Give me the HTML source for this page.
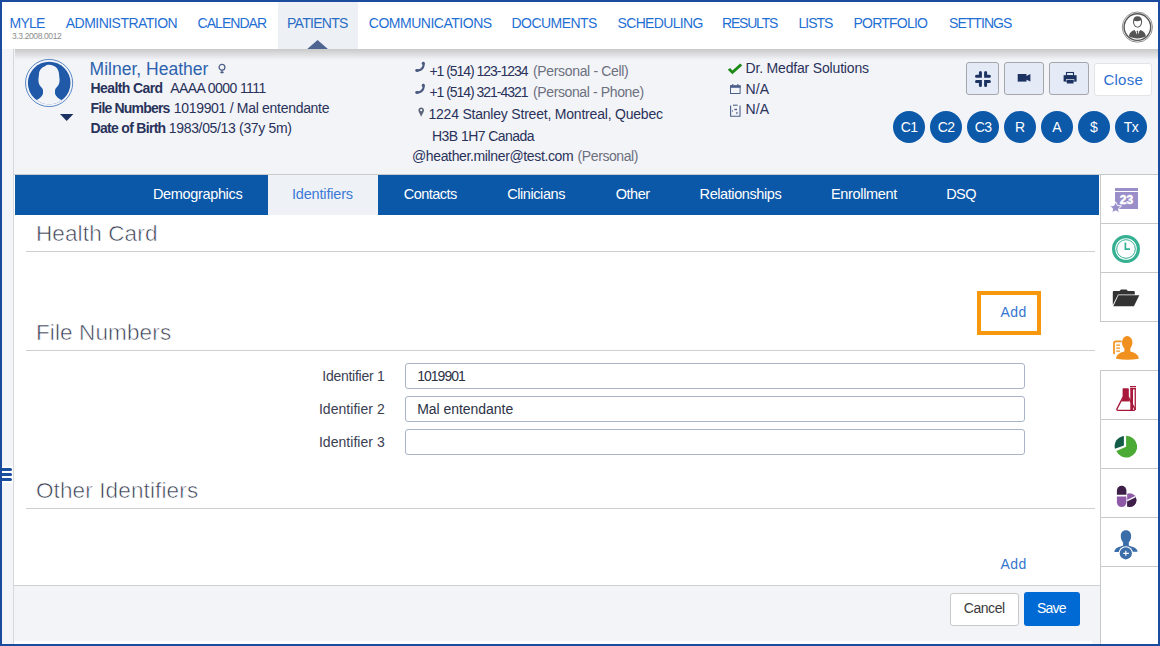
<!DOCTYPE html>
<html><head><meta charset="utf-8">
<style>
html,body{margin:0;padding:0;width:1160px;height:646px;overflow:hidden;background:#fff;font-family:"Liberation Sans",sans-serif;}
.a{position:absolute;}
.t{position:absolute;white-space:nowrap;font-family:"Liberation Sans",sans-serif;}
svg{position:absolute;overflow:visible;}
</style></head><body>
<!-- nav -->
<div class="a" style="left:0;top:0;width:1160px;height:49px;background:#fff"></div>
<div class="a" style="left:278px;top:2px;width:80px;height:47px;background:#edf1f6"></div>
<svg style="left:0;top:0" width="1160" height="60"><polygon points="307.2,49 317.6,40 327.9,49" fill="#4f6591"/></svg>
<!-- user avatar -->
<svg style="left:1118px;top:8px" width="38" height="38" viewBox="0 0 38 38">
 <circle cx="19.4" cy="19.1" r="15.1" fill="none" stroke="#808080" stroke-width="0.9"/>
 <circle cx="19.4" cy="19.1" r="13.3" fill="none" stroke="#555" stroke-width="1.4"/>
 <path d="M15 13.5c0-3.4 1.9-5.3 4.5-5.3s4.6 1.9 4.6 5.2c0 3.5-1.9 6-4.6 6s-4.5-2.5-4.5-5.9z" fill="#555"/>
 <path d="M16.2 12.8c1.2 0.8 4.8 0.6 6.7-0.6 0.2 0.8 0.2 1.6 0.1 2.4-0.3 2.4-1.7 4.1-3.5 4.1s-3.2-1.7-3.4-4.1c-0.1-0.6 0-1.2 0.1-1.8z" fill="#fff"/>
 <path d="M10.9 28.3c0.3-3.3 2.1-5.2 5.6-6.4l2.9 3.2 2.9-3.2c3.5 1.2 5.3 3.1 5.6 6.4-2.3 1.3-5.5 2.1-8.5 2.1s-6.2-0.8-8.5-2.1z" fill="#555"/>
 <path d="M17 21.7l2.4 6.6 2.4-6.6-1.5-0.4-0.9 1-0.9-1z" fill="#fff"/>
 <path d="M19.4 22.6l-0.9 1 0.5 0.8-0.6 3.3 1 1.3 1-1.3-0.6-3.3 0.5-0.8z" fill="#555"/>
</svg>

<!-- left strip -->
<div class="a" style="left:2px;top:49px;width:11px;height:597px;background:#f3f4f8"></div>
<div class="a" style="left:13px;top:49px;width:1px;height:597px;background:#d6d8de"></div>
<!-- hamburger -->
<div class="a" style="left:2px;top:466px;width:11px;height:17px;background:#fff"></div>
<div class="a" style="left:2px;top:468.3px;width:10px;height:2.5px;background:#1a4fa0;border-radius:0 2px 2px 0"></div>
<div class="a" style="left:2px;top:473.3px;width:10px;height:2.5px;background:#1a4fa0;border-radius:0 2px 2px 0"></div>
<div class="a" style="left:2px;top:478.2px;width:10px;height:2.5px;background:#1a4fa0;border-radius:0 2px 2px 0"></div>

<!-- banner -->
<div class="a" style="left:14px;top:49px;width:1144px;height:125px;background:#f3f4f8"></div>
<div class="a" style="left:14px;top:173.5px;width:1144px;height:1px;background:#c9cacd"></div>
<div class="a" style="left:15px;top:49px;width:1143px;height:11px;background:linear-gradient(#c9c9c9,rgba(243,244,248,0))"></div>

<!-- patient avatar -->
<svg style="left:25px;top:59px" width="48" height="48" viewBox="0 0 48 48">
 <defs><clipPath id="pc"><circle cx="24.2" cy="24" r="21.3"/></clipPath></defs>
 <circle cx="24.1" cy="24" r="23.6" fill="none" stroke="#4a7cc0" stroke-width="0.9"/>
 <circle cx="24.2" cy="24" r="21.3" fill="#2059a8"/>
 <path clip-path="url(#pc)" d="M24 5.8C29.5 5.8 33.8 9.5 34 15C34.2 18 34.8 20 34.5 22.5C34.2 25 33 27 31.5 28.5C30.5 29.5 30 30.5 30 32L30 34.5C30.5 37 33 39.5 37.5 41.5L40 50L8 50L10.5 41.5C15 39.5 17.5 37 18 34.5L18 32C18 30.5 17.5 29.5 16.5 28.5C15 27 13.8 25 13.5 22.5C13.2 20 13.8 18 14 15C14.2 11 17 8 20 7.2C21.2 6.2 22.5 5.8 24 5.8z" fill="#f3f4f8"/>
</svg>
<svg style="left:59.7px;top:114px" width="14" height="8"><polygon points="0,0 13.4,0 6.7,7" fill="#1c3260"/></svg>
<!-- female symbol -->
<svg style="left:217px;top:63.2px" width="10" height="12" viewBox="0 0 10 12">
 <circle cx="5" cy="4.2" r="2.9" fill="none" stroke="#4d6189" stroke-width="1.3"/>
 <path d="M5 7v3.6M3.3 9.3h3.4" stroke="#4d6189" stroke-width="1.3"/>
</svg>
<!-- phone icons -->
<svg style="left:414px;top:61px" width="12" height="12" viewBox="0 0 12 12"><path d="M9.3 2C9.8 3 9.6 5 9 6.2 8.1 8 6.3 9.3 3.2 9.7" fill="none" stroke="#4a5a80" stroke-width="2.2" stroke-linecap="round"/><ellipse cx="9.3" cy="2.3" rx="1.5" ry="1.6" fill="#4a5a80"/><ellipse cx="3" cy="9.5" rx="1.8" ry="1.4" fill="#4a5a80"/></svg>
<svg style="left:414px;top:83px" width="12" height="12" viewBox="0 0 12 12"><path d="M9.3 2C9.8 3 9.6 5 9 6.2 8.1 8 6.3 9.3 3.2 9.7" fill="none" stroke="#4a5a80" stroke-width="2.2" stroke-linecap="round"/><ellipse cx="9.3" cy="2.3" rx="1.5" ry="1.6" fill="#4a5a80"/><ellipse cx="3" cy="9.5" rx="1.8" ry="1.4" fill="#4a5a80"/></svg>
<!-- pin -->
<svg style="left:417.5px;top:106.5px" width="7" height="10" viewBox="0 0 7 10">
 <path d="M3.2 0.4c-1.6 0-2.8 1.3-2.8 2.9 0 1.8 1.6 3.4 2.6 6.3h0.4c1-2.9 2.6-4.5 2.6-6.3 0-1.6-1.2-2.9-2.8-2.9z" fill="#5b6478"/>
 <circle cx="3.2" cy="3.2" r="1.1" fill="#f3f4f8"/>
</svg>
<!-- check -->
<svg style="left:727px;top:62.5px" width="16" height="12" viewBox="0 0 16 12">
 <path d="M0.8 6.8l2.3-1.9 2.3 2.5 7.8-6.9 2 1.9-9.8 8.9z" fill="#1d8a18"/>
</svg>
<!-- calendar small -->
<svg style="left:730px;top:84px" width="11" height="10" viewBox="0 0 11 10">
 <rect x="0.5" y="2.2" width="9.6" height="7.3" fill="none" stroke="#4c5f88" stroke-width="1"/>
 <rect x="0" y="1.2" width="10.6" height="2.6" fill="#4c5f88"/>
 <rect x="2.2" y="0" width="1.1" height="1.6" fill="#4c5f88"/><rect x="7.3" y="0" width="1.1" height="1.6" fill="#4c5f88"/>
</svg>
<!-- clipboard small -->
<svg style="left:730px;top:103.8px" width="11" height="13" viewBox="0 0 11 13">
 <path d="M0.6 1.6v10.6h9.4V1.6" fill="none" stroke="#4c5f88" stroke-width="1.1"/>
 <path d="M3 1.2h4.6" stroke="#4c5f88" stroke-width="1.1"/>
 <rect x="4.4" y="4.8" width="2.6" height="1.4" fill="#4c5f88"/>
 <rect x="2" y="6" width="1" height="2" fill="#8a9ab8"/>
 <rect x="6.2" y="8.2" width="1.4" height="1.6" fill="#4c5f88"/>
</svg>

<!-- action buttons -->
<div class="a" style="left:966.4px;top:62.2px;width:30.4px;height:30.6px;background:#e4ebf7;border:1px solid #a4a6ab;border-radius:3px"></div>
<div class="a" style="left:1004.3px;top:62.2px;width:37.5px;height:30.6px;background:#e4ebf7;border:1px solid #a4a6ab;border-radius:3px"></div>
<div class="a" style="left:1049px;top:62.2px;width:38px;height:30.6px;background:#e4ebf7;border:1px solid #a4a6ab;border-radius:3px"></div>
<div class="a" style="left:1094px;top:62.5px;width:55.5px;height:31.8px;background:#fff;border:1px solid #e2e4e8;border-radius:3px"></div>
<!-- compress icon -->
<svg style="left:970px;top:66px" width="26" height="26" viewBox="0 0 26 26" fill="none" stroke="#1c3260" stroke-width="3" stroke-linecap="round" stroke-linejoin="miter">
 <path d="M10.4 6.5V10.3H6.5"/><path d="M15.6 6.5V10.3H19.4"/><path d="M6.5 15.4H10.4V19.4"/><path d="M19.4 15.4H15.6V19.4"/>
</svg>
<!-- video icon -->
<svg style="left:1010px;top:66px" width="24" height="24" viewBox="0 0 24 24">
 <rect x="7.7" y="8" width="8.8" height="7.6" fill="#1c3260"/>
 <path d="M16 10.2L20.4 8V15.6L16 13.4z" fill="#1c3260"/>
</svg>
<!-- printer icon -->
<svg style="left:1060px;top:70px" width="20" height="16" viewBox="0 0 20 16">
 <rect x="6.5" y="2.5" width="7" height="3.3" fill="none" stroke="#1c3260" stroke-width="1.1"/>
 <rect x="3.6" y="5.2" width="13" height="6.4" fill="#1c3260"/>
 <rect x="6" y="9.2" width="8.3" height="1.4" fill="#e4ebf7"/>
 <rect x="6.8" y="9.9" width="6.7" height="3.6" fill="#1c3260"/>
</svg>
<!-- circles -->
<div class="a" style="left:893px;top:111px;width:32px;height:32px;border-radius:50%;background:#0c58a9"></div>
<div class="a" style="left:930px;top:111px;width:32px;height:32px;border-radius:50%;background:#0c58a9"></div>
<div class="a" style="left:967px;top:111px;width:32px;height:32px;border-radius:50%;background:#0c58a9"></div>
<div class="a" style="left:1004px;top:111px;width:32px;height:32px;border-radius:50%;background:#0c58a9"></div>
<div class="a" style="left:1041px;top:111px;width:32px;height:32px;border-radius:50%;background:#0c58a9"></div>
<div class="a" style="left:1078px;top:111px;width:32px;height:32px;border-radius:50%;background:#0c58a9"></div>
<div class="a" style="left:1115px;top:111px;width:32px;height:32px;border-radius:50%;background:#0c58a9"></div>
<div class="t" style="left:893px;top:119px;width:32px;text-align:center;font-size:14px;line-height:16px;color:#fff;letter-spacing:-0.6px">C1</div>
<div class="t" style="left:930px;top:119px;width:32px;text-align:center;font-size:14px;line-height:16px;color:#fff;letter-spacing:-0.6px">C2</div>
<div class="t" style="left:967px;top:119px;width:32px;text-align:center;font-size:14px;line-height:16px;color:#fff;letter-spacing:-0.6px">C3</div>
<div class="t" style="left:1004px;top:119px;width:32px;text-align:center;font-size:14px;line-height:16px;color:#fff">R</div>
<div class="t" style="left:1041px;top:119px;width:32px;text-align:center;font-size:14px;line-height:16px;color:#fff">A</div>
<div class="t" style="left:1078px;top:119px;width:32px;text-align:center;font-size:14px;line-height:16px;color:#fff">$</div>
<div class="t" style="left:1115px;top:119px;width:32px;text-align:center;font-size:14px;line-height:16px;color:#fff;letter-spacing:-0.6px">Tx</div>

<!-- tab bar -->
<div class="a" style="left:15px;top:174.5px;width:1084px;height:40.3px;background:#0b57a8"></div>
<div class="a" style="left:268px;top:174.5px;width:110.3px;height:40.3px;background:#eef2f7"></div>

<!-- content -->
<div class="a" style="left:14px;top:214.8px;width:1086px;height:370px;background:#fff"></div>
<div class="a" style="left:26px;top:251px;width:1069px;height:1px;background:#cfcfcf"></div>
<div class="a" style="left:26px;top:350px;width:1069px;height:1px;background:#cfcfcf"></div>
<div class="a" style="left:26px;top:508px;width:1069px;height:1px;background:#cfcfcf"></div>
<!-- inputs -->
<div class="a" style="left:405.4px;top:363.2px;width:617.2px;height:23.4px;border:1px solid #a9b4c8;border-radius:3px;background:#fff"></div>
<div class="a" style="left:405.4px;top:396.2px;width:617.2px;height:23.6px;border:1px solid #a9b4c8;border-radius:3px;background:#fff"></div>
<div class="a" style="left:405.4px;top:429.4px;width:617.2px;height:23.2px;border:1px solid #a9b4c8;border-radius:3px;background:#fff"></div>
<!-- add highlight -->
<div class="a" style="left:977px;top:291px;width:56px;height:36px;border:4px solid #f7970d"></div>

<!-- footer -->
<div class="a" style="left:14px;top:585px;width:1086px;height:59px;background:#f3f4f8"></div>
<div class="a" style="left:14px;top:585px;width:1086px;height:1px;background:#d0d0d0"></div>
<div class="a" style="left:950.4px;top:592.5px;width:66.3px;height:31px;background:#fff;border:1px solid #c9c9c9;border-radius:3px"></div>
<div class="a" style="left:1024px;top:592.3px;width:56px;height:33.5px;background:#006ad4;border-radius:3px"></div>
<div class="a" style="left:14px;top:641px;width:1078px;height:3px;background:#fff"></div>

<!-- right sidebar -->
<div class="a" style="left:1100px;top:174.5px;width:58px;height:470px;background:#fff"></div>
<div class="a" style="left:1100px;top:174.5px;width:1px;height:147px;background:#c9c9c9"></div>
<div class="a" style="left:1100px;top:370.5px;width:1px;height:275px;background:#c9c9c9"></div>
<div class="a" style="left:1100px;top:174px;width:58px;height:1px;background:#c9c9c9"></div>
<div class="a" style="left:1100px;top:223px;width:58px;height:1px;background:#c9c9c9"></div>
<div class="a" style="left:1100px;top:272px;width:58px;height:1px;background:#c9c9c9"></div>
<div class="a" style="left:1100px;top:321px;width:58px;height:1px;background:#c9c9c9"></div>
<div class="a" style="left:1100px;top:370px;width:58px;height:1px;background:#c9c9c9"></div>
<div class="a" style="left:1100px;top:419px;width:58px;height:1px;background:#c9c9c9"></div>
<div class="a" style="left:1100px;top:468px;width:58px;height:1px;background:#c9c9c9"></div>
<div class="a" style="left:1100px;top:517px;width:58px;height:1px;background:#c9c9c9"></div>
<div class="a" style="left:1100px;top:566px;width:58px;height:1px;background:#c9c9c9"></div>
<!-- sidebar icons -->
<svg style="left:1108px;top:186px" width="32" height="28" viewBox="0 0 32 28">
 <rect x="7" y="2" width="23" height="3" fill="#9b8fc9"/>
 <rect x="7" y="6" width="23" height="17" fill="#9b8fc9"/>
 <text x="18.4" y="18" font-family="Liberation Sans" font-weight="bold" font-size="12" fill="#fff" text-anchor="middle" stroke="#fff" stroke-width="0.5">23</text>
 <path d="M7.6 15.8l1.8 3.7 4.1 0.5-3 2.8 0.8 4-3.7-2-3.7 2 0.8-4-3-2.8 4.1-0.5z" fill="#9b8fc9" stroke="#fff" stroke-width="1"/>
</svg>
<svg style="left:1111px;top:234px" width="30" height="30" viewBox="0 0 30 30">
 <circle cx="15" cy="15" r="12.4" fill="none" stroke="#35b093" stroke-width="3.2"/>
 <circle cx="15" cy="15" r="9.3" fill="none" stroke="#35b093" stroke-width="1"/>
 <path d="M14.4 8.5v6.6h4.6" fill="none" stroke="#35b093" stroke-width="1.7"/>
</svg>
<svg style="left:1112px;top:289px" width="28" height="18" viewBox="0 0 28 18">
 <path d="M0.8 16.5V3.2c0-0.8 0.5-1.3 1.2-1.3h5.5l1.5-1.4h5.5l1.3 1.4h5.8c0.7 0 1.2 0.5 1.2 1.3v2.3H6L0.8 16z" fill="#333"/>
 <path d="M1.3 17.2l5.1-11h20.9l-5.4 11z" fill="#333"/>
</svg>
<svg style="left:1108px;top:330px" width="36" height="36" viewBox="0 0 36 36">
 <ellipse cx="19.2" cy="12.6" rx="5.3" ry="6.6" fill="#f0901e"/>
 <rect x="16.4" y="16" width="5.9" height="7" fill="#f0901e"/>
 <path d="M8.1 28.8C8.1 25 11.5 22.8 16.4 21.6H22.3C27.2 22.8 30.7 25 30.7 28.8Q19.4 30.6 8.1 28.8z" fill="#f0901e"/>
 <path d="M6 23.4V13.2Q6 11.3 7.9 11.3H12.9" fill="none" stroke="#f0901e" stroke-width="1.7" stroke-linecap="round"/>
 <path d="M8.2 15.2h3.8M8.2 18.2h3.8M8.2 21.2h3.8" stroke="#f0901e" stroke-width="1.3"/>
</svg>
<svg style="left:1108px;top:380px" width="36" height="36" viewBox="0 0 36 36">
 <path d="M15.3 8.9h4.8v7.8l6.6 12c0.5 1 0 1.7-1 1.7H10c-1 0-1.5-0.7-1-1.7l6.3-12z" fill="none" stroke="#a8183a" stroke-width="1.4" stroke-linejoin="round"/>
 <path d="M15.3 8.9h4.8v7.8l1.6 4.5H13.7l1.6-4.5z" fill="#a8183a"/>
 <path d="M14 21.2h7.6l-0.4-1H14.5z" fill="#a8183a"/>
 <rect x="22" y="6" width="6" height="1" fill="#a8183a"/>
 <rect x="22.3" y="7.8" width="5.6" height="1.6" fill="#a8183a"/>
 <rect x="22.3" y="7.8" width="2.7" height="22.2" fill="#a8183a"/>
 <rect x="26.6" y="7.8" width="1.3" height="22.2" fill="#a8183a"/>
</svg>
<svg style="left:1108px;top:428px" width="36" height="36" viewBox="0 0 36 36">
 <path d="M18.1 18.7V7.8A10.9 10.9 0 1 1 8.3 23.1z" fill="#4aaa34"/>
 <path d="M15.9 17.5V8.1A10 10 0 0 0 7 20.8z" fill="#135c48"/>
</svg>
<svg style="left:1108px;top:478px" width="36" height="36" viewBox="0 0 36 36">
 <defs><clipPath id="rp"><rect x="19.2" y="0" width="20" height="36"/></clipPath><clipPath id="rc"><circle cx="21.6" cy="22.1" r="6.9"/></clipPath></defs>
 <path d="M8.9 12.5A4.75 4.75 0 0 1 18.4 12.5V16.7H8.9z" fill="#3d1f4a"/>
 <path d="M8.9 18.6H18.4V24.3A4.75 4.75 0 0 1 8.9 24.3z" fill="#8e5aa8"/>
 <g clip-path="url(#rp)"><g clip-path="url(#rc)">
  <rect x="10" y="10" width="25" height="25" fill="#8e5aa8"/>
  <path d="M13 26.5L30 17.5V32H13z" fill="#3d1f4a"/>
  <path d="M17 23.8L28.5 18.2" stroke="#fff" stroke-width="1.3"/>
 </g></g>
</svg>
<svg style="left:1108px;top:526px" width="36" height="36" viewBox="0 0 36 36">
 <path d="M17.8 4.2c-3 0-5 2.3-5 5.6 0 1.2 0.1 2.2 0.3 3 0.5 1.6 1.2 2.8 2 3.5V19.5c-0.3 0.3-1.8 0.8-3.6 1.3-2.8 0.8-4.8 2.4-5.2 4.8 0.4 0.5 0.9 0.6 1.3 0.4l20.9-0.2c0.5 0.1 0.9-0.1 1.1-0.5-0.5-2.2-2.5-3.7-5.2-4.5-1.8-0.5-3.3-1-3.6-1.3V16.3c0.8-0.7 1.5-1.9 2-3.5 0.2-0.8 0.3-1.8 0.3-3 0-3.3-2-5.6-5-5.6z" fill="#3b6ea9"/>
 <circle cx="17.8" cy="27.3" r="7.1" fill="#fff"/>
 <circle cx="17.8" cy="27.3" r="6.1" fill="#3b6ea9"/>
 <path d="M15.3 27.3h5.6M17.8 24.8v5" stroke="#fff" stroke-width="1.2"/>
</svg>

<div class="t" style="left:9.50px;top:15.90px;font-size:14px;line-height:14px;color:#1f6fd3;letter-spacing:-0.762px;">MYLE</div>
<div class="t" style="left:65.75px;top:15.90px;font-size:14px;line-height:14px;color:#1f6fd3;letter-spacing:-0.529px;">ADMINISTRATION</div>
<div class="t" style="left:197.50px;top:15.90px;font-size:14px;line-height:14px;color:#1f6fd3;letter-spacing:-0.947px;">CALENDAR</div>
<div class="t" style="left:287.00px;top:15.90px;font-size:14px;line-height:14px;color:#2a6cc4;letter-spacing:-0.720px;">PATIENTS</div>
<div class="t" style="left:368.75px;top:15.90px;font-size:14px;line-height:14px;color:#1f6fd3;letter-spacing:-0.483px;">COMMUNICATIONS</div>
<div class="t" style="left:511.50px;top:15.90px;font-size:14px;line-height:14px;color:#1f6fd3;letter-spacing:-0.548px;">DOCUMENTS</div>
<div class="t" style="left:617.50px;top:15.90px;font-size:14px;line-height:14px;color:#1f6fd3;letter-spacing:-0.656px;">SCHEDULING</div>
<div class="t" style="left:722.00px;top:15.90px;font-size:14px;line-height:14px;color:#1f6fd3;letter-spacing:-1.199px;">RESULTS</div>
<div class="t" style="left:798.50px;top:15.90px;font-size:14px;line-height:14px;color:#1f6fd3;letter-spacing:-1.016px;">LISTS</div>
<div class="t" style="left:853.50px;top:15.90px;font-size:14px;line-height:14px;color:#1f6fd3;letter-spacing:-0.782px;">PORTFOLIO</div>
<div class="t" style="left:949.00px;top:15.90px;font-size:14px;line-height:14px;color:#1f6fd3;letter-spacing:-0.953px;">SETTINGS</div>
<div class="t" style="left:12.00px;top:31.88px;font-size:8.5px;line-height:8.5px;color:#8d8d8d;letter-spacing:-0.386px;">3.3.2008.0012</div>
<div class="t" style="left:89.60px;top:61.03px;font-size:17.5px;line-height:17.5px;color:#2d63ae;letter-spacing:0.012px;">Milner, Heather</div>
<div class="t" style="left:90.60px;top:81.10px;font-size:14px;line-height:14px;color:#29325a;font-weight:700;letter-spacing:-0.602px;">Health Card</div>
<div class="t" style="left:170.20px;top:81.10px;font-size:14px;line-height:14px;color:#29325a;letter-spacing:-0.578px;">AAAA 0000 1111</div>
<div class="t" style="left:90.60px;top:101.40px;font-size:14px;line-height:14px;color:#29325a;font-weight:700;letter-spacing:-0.809px;">File Numbers</div>
<div class="t" style="left:173.70px;top:101.40px;font-size:14px;line-height:14px;color:#29325a;letter-spacing:-0.300px;">1019901 / Mal entendante</div>
<div class="t" style="left:90.60px;top:120.90px;font-size:14px;line-height:14px;color:#29325a;font-weight:700;letter-spacing:-0.704px;">Date of Birth</div>
<div class="t" style="left:168.80px;top:120.90px;font-size:14px;line-height:14px;color:#29325a;letter-spacing:-0.335px;">1983/05/13 (37y 5m)</div>
<div class="t" style="left:429.40px;top:63.60px;font-size:14px;line-height:14px;color:#29325a;letter-spacing:-1.031px;">+1 (514) 123-1234</div>
<div class="t" style="left:533.00px;top:63.60px;font-size:14px;line-height:14px;color:#6c707e;letter-spacing:-0.342px;">(Personal - Cell)</div>
<div class="t" style="left:429.40px;top:85.40px;font-size:14px;line-height:14px;color:#29325a;letter-spacing:-1.031px;">+1 (514) 321-4321</div>
<div class="t" style="left:533.00px;top:85.40px;font-size:14px;line-height:14px;color:#6c707e;letter-spacing:-0.379px;">(Personal - Phone)</div>
<div class="t" style="left:428.40px;top:107.10px;font-size:14px;line-height:14px;color:#29325a;letter-spacing:-0.206px;">1224 Stanley Street, Montreal, Quebec</div>
<div class="t" style="left:432.00px;top:128.70px;font-size:14px;line-height:14px;color:#29325a;letter-spacing:-0.550px;">H3B 1H7 Canada</div>
<div class="t" style="left:412.00px;top:148.90px;font-size:14px;line-height:14px;color:#29325a;letter-spacing:-0.364px;">@heather.milner@test.com</div>
<div class="t" style="left:577.60px;top:148.90px;font-size:14px;line-height:14px;color:#6c707e;letter-spacing:-0.413px;">(Personal)</div>
<div class="t" style="left:745.50px;top:61.30px;font-size:14px;line-height:14px;color:#29325a;letter-spacing:-0.175px;">Dr. Medfar Solutions</div>
<div class="t" style="left:745.50px;top:82.00px;font-size:14px;line-height:14px;color:#29325a;letter-spacing:0.100px;">N/A</div>
<div class="t" style="left:745.50px;top:102.10px;font-size:14px;line-height:14px;color:#29325a;letter-spacing:0.100px;">N/A</div>
<div class="t" style="left:1103.40px;top:72.05px;font-size:15px;line-height:15px;color:#2d6fd0;letter-spacing:0.248px;">Close</div>
<div class="t" style="left:153.00px;top:187.18px;font-size:14.5px;line-height:14.5px;color:#ffffff;letter-spacing:-0.349px;">Demographics</div>
<div class="t" style="left:292.00px;top:187.18px;font-size:14.5px;line-height:14.5px;color:#3d7ad6;letter-spacing:-0.181px;">Identifiers</div>
<div class="t" style="left:403.80px;top:187.18px;font-size:14.5px;line-height:14.5px;color:#ffffff;letter-spacing:-0.539px;">Contacts</div>
<div class="t" style="left:507.20px;top:187.18px;font-size:14.5px;line-height:14.5px;color:#ffffff;letter-spacing:-0.422px;">Clinicians</div>
<div class="t" style="left:615.80px;top:187.18px;font-size:14.5px;line-height:14.5px;color:#ffffff;letter-spacing:-0.509px;">Other</div>
<div class="t" style="left:699.60px;top:187.18px;font-size:14.5px;line-height:14.5px;color:#ffffff;letter-spacing:-0.417px;">Relationships</div>
<div class="t" style="left:831.00px;top:187.18px;font-size:14.5px;line-height:14.5px;color:#ffffff;letter-spacing:-0.342px;">Enrollment</div>
<div class="t" style="left:946.20px;top:187.18px;font-size:14.5px;line-height:14.5px;color:#ffffff;letter-spacing:-0.571px;">DSQ</div>
<div class="t" style="left:35.90px;top:222.88px;font-size:22.5px;line-height:22.5px;color:#353b50;font-weight:300;letter-spacing:0.145px;-webkit-text-stroke:0.6px #fff;">Health Card</div>
<div class="t" style="left:35.90px;top:321.88px;font-size:22.5px;line-height:22.5px;color:#353b50;font-weight:300;letter-spacing:0.134px;-webkit-text-stroke:0.6px #fff;">File Numbers</div>
<div class="t" style="left:35.90px;top:479.88px;font-size:22.5px;line-height:22.5px;color:#353b50;font-weight:300;letter-spacing:0.136px;-webkit-text-stroke:0.6px #fff;">Other Identifiers</div>
<div class="t" style="left:322.30px;top:369.10px;font-size:14px;line-height:14px;color:#3a4052;letter-spacing:-0.262px;">Identifier 1</div>
<div class="t" style="left:318.90px;top:401.90px;font-size:14px;line-height:14px;color:#3a4052;letter-spacing:0.047px;">Identifier 2</div>
<div class="t" style="left:318.90px;top:435.10px;font-size:14px;line-height:14px;color:#3a4052;letter-spacing:0.047px;">Identifier 3</div>
<div class="t" style="left:417.20px;top:369.10px;font-size:14px;line-height:14px;color:#2c3246;letter-spacing:-0.986px;">1019901</div>
<div class="t" style="left:417.20px;top:401.90px;font-size:14px;line-height:14px;color:#2c3246;letter-spacing:-0.041px;">Mal entendante</div>
<div class="t" style="left:1000.50px;top:305.10px;font-size:14px;line-height:14px;color:#3476cf;letter-spacing:0.438px;">Add</div>
<div class="t" style="left:1000.50px;top:557.10px;font-size:14px;line-height:14px;color:#3476cf;letter-spacing:0.438px;">Add</div>
<div class="t" style="left:963.80px;top:601.10px;font-size:14px;line-height:14px;color:#3a3a3a;letter-spacing:-0.454px;">Cancel</div>
<div class="t" style="left:1037.00px;top:601.10px;font-size:14px;line-height:14px;color:#ffffff;letter-spacing:-0.808px;">Save</div>

<!-- frame border -->
<div class="a" style="left:0;top:0;width:1160px;height:2px;background:#1a4b9c"></div>
<div class="a" style="left:0;top:644px;width:1160px;height:2px;background:#1a4b9c"></div>
<div class="a" style="left:0;top:0;width:2px;height:646px;background:#1a4b9c"></div>
<div class="a" style="left:1158px;top:0;width:2px;height:646px;background:#1a4b9c"></div>
</body></html>
